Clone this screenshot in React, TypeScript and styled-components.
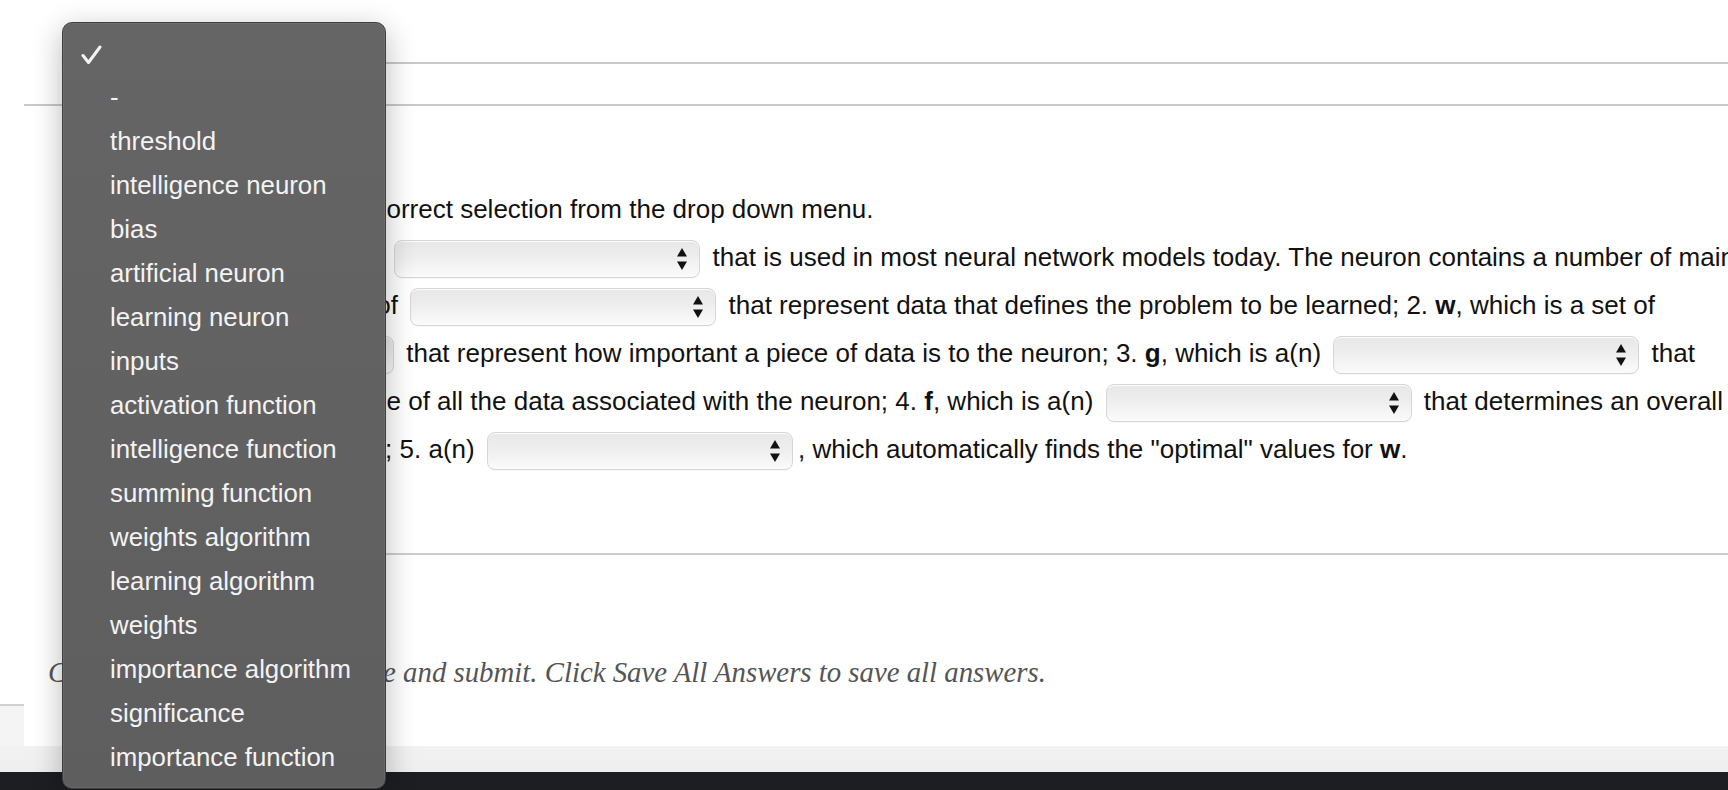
import React from "react";
import styled, { createGlobalStyle } from "styled-components";

const GlobalStyle = createGlobalStyle`
  html, body {
    margin: 0;
    padding: 0;
    background: #ffffff;
    overflow: hidden;
  }
  #root {
    width: 1728px;
    height: 790px;
  }
`;

const Page = styled.div`
  position: relative;
  width: 1728px;
  height: 790px;
  overflow: hidden;
  display: flex;
  flex-direction: column;
  background: #ffffff;
  font-family: "Liberation Sans", Arial, Helvetica, sans-serif;
`;

const HeaderRule = styled.div`
  flex: none;
  height: 62px;
  margin-left: 84px;
  border-bottom: 2px solid #c9c9c9;
`;

const Body = styled.div`
  flex: 1;
  display: flex;
  margin-top: 40px;
  min-height: 0;
`;

const Gutter = styled.div`
  flex: none;
  width: 24px;
  display: flex;
  flex-direction: column;
  justify-content: flex-end;
`;

const GutterFoot = styled.div`
  height: 40px;
  border-top: 2px solid #d0d0d0;
  background: #f4f4f4;
`;

const QuestionBox = styled.section`
  flex: 1;
  min-width: 0;
  display: flex;
  flex-direction: column;
  border-top: 2px solid #c9c9c9;
  background: #ffffff;
`;

const Prompt = styled.div`
  margin-top: 79px;
  padding-left: 59px;
  font-size: 26px;
  line-height: 48px;
  color: #111111;
  white-space: nowrap;
`;

const Line = styled.div`
  height: 48px;
`;

const Var = styled.b`
  font-weight: 700;
`;

const Blank = styled.span`
  display: inline-flex;
  align-items: center;
  justify-content: flex-end;
  box-sizing: border-box;
  width: 306px;
  height: 38px;
  margin: 0 5px;
  padding-right: 12px;
  vertical-align: middle;
  border: 1px solid #d6d6d6;
  border-radius: 8px;
  background: linear-gradient(to bottom, #e7e7e7 0%, #efefef 50%, #fbfbfb 100%);
  box-shadow: inset 0 1px 1px rgba(255, 255, 255, 0.9), 0 1px 0 rgba(0, 0, 0, 0.03);
`;

const Divider = styled.div`
  margin-top: 80px;
  margin-left: 60px;
  border-top: 2px solid #cdcdcd;
`;

const Instructions = styled.p`
  margin: 99px 0 0;
  padding-left: 24px;
  font-family: "Liberation Serif", "Times New Roman", serif;
  font-style: italic;
  font-size: 28.8px;
  line-height: 36px;
  color: #555555;
  white-space: nowrap;
`;

const BottomBand = styled.div`
  flex: none;
  height: 26px;
  background: linear-gradient(to bottom, #f2f2f2, #eeeeee);
`;

const DarkBar = styled.div`
  flex: none;
  height: 18px;
  background: #1d1e21;
`;

const Menu = styled.ul`
  position: absolute;
  left: 62px;
  top: 22px;
  width: 324px;
  height: 767px;
  box-sizing: border-box;
  margin: 0;
  padding: 8px 0 0;
  list-style: none;
  border: 1px solid #3e3e3e;
  border-radius: 10px;
  background: linear-gradient(to bottom, #656565, #5e5e5e);
  box-shadow: 0 8px 30px rgba(0, 0, 0, 0.28), inset 0 0 0 1px rgba(255, 255, 255, 0.06);
  font-family: "Liberation Sans", Arial, Helvetica, sans-serif;
`;

const MenuItem = styled.li`
  position: relative;
  height: 44px;
  display: flex;
  align-items: center;
  padding-left: 47px;
  font-size: 25.8px;
  color: #f3f3f3;
  white-space: nowrap;
`;

const Check = styled.svg`
  position: absolute;
  left: 18px;
  top: 14px;
`;

const Arrows = () => (
  <svg width="10" height="22" viewBox="0 0 10 22">
    <polygon points="5,0 10,8.5 0,8.5" fill="#111" />
    <polygon points="0,13.5 10,13.5 5,22" fill="#111" />
  </svg>
);

const Select = () => (
  <Blank role="combobox">
    <Arrows />
  </Blank>
);

const options = [
  "",
  "-",
  "threshold",
  "intelligence neuron",
  "bias",
  "artificial neuron",
  "learning neuron",
  "inputs",
  "activation function",
  "intelligence function",
  "summing function",
  "weights algorithm",
  "learning algorithm",
  "weights",
  "importance algorithm",
  "significance",
  "importance function",
];

export default function App() {
  return (
    <>
      <GlobalStyle />
      <Page>
        <HeaderRule />
        <Body>
          <Gutter>
            <GutterFoot />
          </Gutter>
          <QuestionBox>
            <Prompt>
              <Line>Fill in the blanks with the correct selection from the drop down menu.</Line>
              <Line>
                The perceptron is a single <Select /> that is used in most neural network models
                today. The neuron contains a number of main
              </Line>
              <Line>
                parts: 1. <Var>x</Var>, which is a set of <Select /> that represent data that
                defines the problem to be learned; 2. <Var>w</Var>, which is a set of
              </Line>
              <Line>
                <Select /> that represent how important a piece of data is to the neuron; 3.{" "}
                <Var>g</Var>, which is a(n) <Select /> that
              </Line>
              <Line>
                takes the weighted average of all the data associated with the neuron; 4.{" "}
                <Var>f</Var>, which is a(n) <Select /> that determines an overall
              </Line>
              <Line>
                output value of the neuron; 5. a(n) <Select />, which automatically finds the
                "optimal" values for <Var>w</Var>.
              </Line>
            </Prompt>
            <Divider />
            <Instructions>
              Click Save and Submit to save and submit. Click Save All Answers to save all answers.
            </Instructions>
          </QuestionBox>
        </Body>
        <BottomBand />
        <DarkBar />
        <Menu role="listbox">
          {options.map((o, i) => (
            <MenuItem key={i} role="option" aria-selected={i === 0}>
              {i === 0 && (
                <Check width="21" height="20" viewBox="0 0 21 20">
                  <polyline
                    points="2,10.5 7.5,17.5 19,2"
                    fill="none"
                    stroke="#f4f4f4"
                    strokeWidth="3"
                    strokeLinecap="round"
                    strokeLinejoin="round"
                  />
                </Check>
              )}
              {o}
            </MenuItem>
          ))}
        </Menu>
      </Page>
    </>
  );
}
